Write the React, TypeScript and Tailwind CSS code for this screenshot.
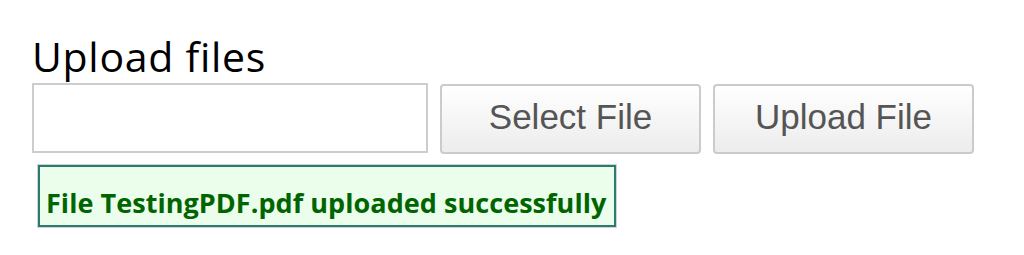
import React from 'react'

const App: React.FC = () => {
  return (
    <div className="w-[1024px] h-[255px] bg-white pl-[32px] pt-[29px]">
      <h1 className="font-['Open_Sans',sans-serif] text-[41px] leading-[54px] font-normal tracking-[0.7px] text-black">
        Upload files
      </h1>
      <div className="flex items-start gap-[12px]">
        <input
          type="text"
          className="w-[396px] h-[70px] border-2 border-[#cdcdcd] bg-white outline-none"
        />
        <button className="mt-px w-[261px] h-[70px] pb-[4px] rounded-[4px] border-2 border-[#cbcbcb] bg-gradient-to-b from-white to-[#ececec] font-['Liberation_Sans',Arial,sans-serif] text-[35px] text-[#555555]">
          Select File
        </button>
        <button className="mt-px w-[261px] h-[70px] pb-[4px] rounded-[4px] border-2 border-[#cbcbcb] bg-gradient-to-b from-white to-[#ececec] font-['Liberation_Sans',Arial,sans-serif] text-[35px] text-[#555555]">
          Upload File
        </button>
      </div>
      <div className="ml-[6px] mt-[11px] w-[578px] h-[62px] border-2 border-[#2c7a72] bg-[#ebfdeb] ring-1 ring-[#d2d2d2] pl-[6px] pt-[20px]">
        <span className="font-['Open_Sans',sans-serif] font-bold text-[27px] leading-[32px] tracking-[0.05px] text-[#006400] whitespace-nowrap">
          File TestingPDF.pdf uploaded successfully
        </span>
      </div>
    </div>
  )
}

export default App
